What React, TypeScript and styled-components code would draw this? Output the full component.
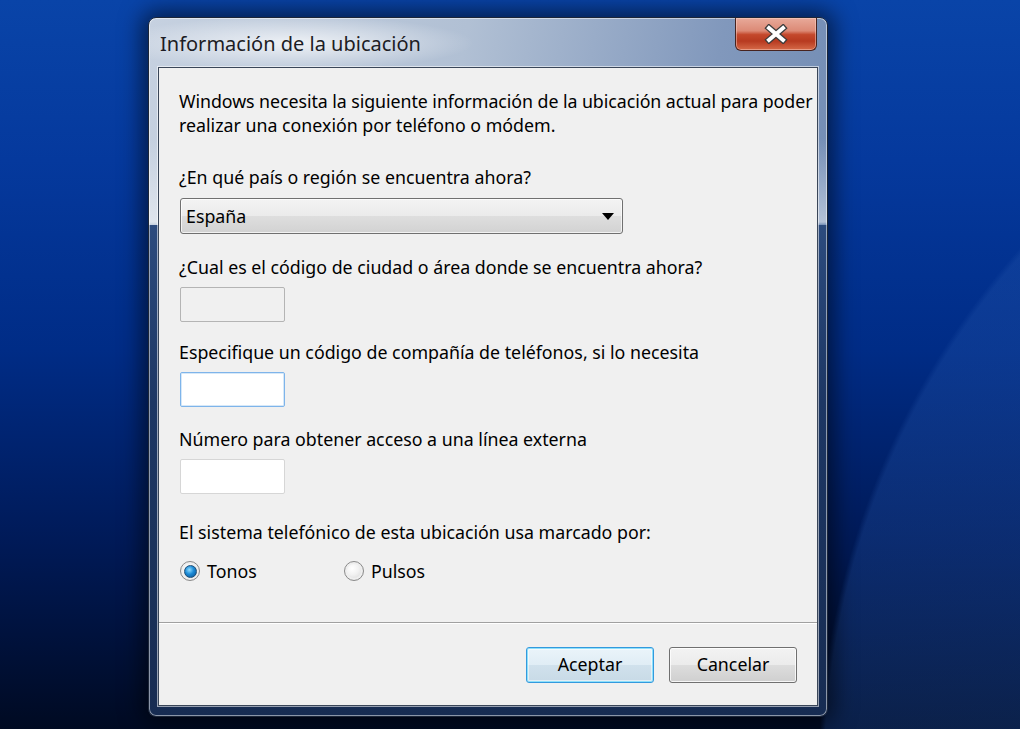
import React from 'react';
import styled, { createGlobalStyle } from 'styled-components';

const GlobalStyle = createGlobalStyle`
  html, body {
    margin: 0;
    padding: 0;
    width: 1020px;
    height: 729px;
    overflow: hidden;
  }
  * {
    box-sizing: border-box;
  }
`;

const uiFont = `"Noto Sans", "Open Sans", "DejaVu Sans", sans-serif`;

const Desktop = styled.div`
  width: 1020px;
  height: 729px;
  padding: 17px 0 0 148px;
  background:
    radial-gradient(circle at 1618px 779px, rgba(40, 90, 175, 0.32) 0, rgba(40, 90, 175, 0.28) 794px, transparent 800px),
    linear-gradient(to bottom, #0944a8 0%, #05399d 22%, #002c86 48%, #001a58 74%, #000a22 100%);
  font-family: ${uiFont};
`;

const Window = styled.div`
  width: 680px;
  height: 700px;
  display: flex;
  flex-direction: column;
  border: 1px solid #1c2638;
  border-radius: 8px;
  background:
    linear-gradient(to bottom, transparent 0, rgba(255, 255, 255, 0) 120px, rgba(255, 255, 255, 0.45) 204px, transparent 207px),
    linear-gradient(to bottom, transparent 0, transparent 207px, #2c4b7e 207px, #1d3764 55%, #172c52 100%),
    linear-gradient(100deg, #c6d1e0 0%, #b1c0d4 40%, #8198bc 72%, #6a86b0 100%);
  box-shadow:
    inset 0 0 0 1px rgba(255, 255, 255, 0.5),
    0 0 22px 6px rgba(0, 0, 0, 0.55);
`;

const TitleBar = styled.div`
  height: 49px;
  display: flex;
  justify-content: space-between;
  align-items: flex-start;
  padding: 0 10px 0 11px;
  background: radial-gradient(ellipse 180px 27px at 145px 25px, rgba(255, 255, 255, 0.75), rgba(255, 255, 255, 0) 100%);
  border-top-left-radius: 7px;
`;

const Title = styled.div`
  align-self: center;
  font-size: 20px;
  color: #1c1c24;
  margin-top: 1px;
`;

const CloseButton = styled.button`
  width: 82px;
  height: 33px;
  display: flex;
  align-items: center;
  justify-content: center;
  padding: 0;
  border: 1px solid #47231f;
  border-top: none;
  border-radius: 0 0 6px 6px;
  background: linear-gradient(to bottom, #e8aa9a 0%, #dc8a76 40%, #c4482c 52%, #b73a20 72%, #d66a48 100%);
  box-shadow: inset 0 0 0 1px rgba(255, 220, 210, 0.45);
`;

const Panel = styled.div`
  flex: 1;
  margin: 0 9px 10px 9px;
  display: flex;
  flex-direction: column;
  overflow: hidden;
  background: #f0f0f0;
  border: 1px solid #3a4658;
  box-shadow: 0 0 0 1px rgba(255, 255, 255, 0.55);
  color: #000;
  font-size: 17.8px;
  line-height: 24px;
`;

const Content = styled.div`
  flex: 1;
  display: flex;
  flex-direction: column;
  padding: 21px 0 0 20px;
`;

const Text = styled.div<{ $top?: number; $tight?: boolean }>`
  margin-top: ${p => p.$top ?? 0}px;
  white-space: nowrap;
  letter-spacing: ${p => (p.$tight ? '-0.06px' : '0')};
`;

const Select = styled.div<{ $top?: number }>`
  margin: ${p => p.$top ?? 0}px 0 0 1px;
  width: 443px;
  height: 36px;
  display: flex;
  align-items: center;
  justify-content: space-between;
  padding: 0 8px 0 5px;
  border: 1px solid #707070;
  border-radius: 3px;
  background: linear-gradient(to bottom, #f3f3f3 0%, #ebebeb 50%, #dedede 51%, #d2d2d2 100%);
  box-shadow: inset 0 0 0 1px rgba(255, 255, 255, 0.7);
`;

const Arrow = styled.span`
  width: 0;
  height: 0;
  border-left: 6px solid transparent;
  border-right: 6px solid transparent;
  border-top: 7px solid #000;
`;

type InputKind = 'disabled' | 'focused' | 'normal';

const Input = styled.div<{ $top?: number; $kind: InputKind }>`
  margin: ${p => p.$top ?? 0}px 0 0 1px;
  width: 105px;
  height: 35px;
  border-radius: 2px;
  border: 1px solid
    ${p => (p.$kind === 'disabled' ? '#b4b4b4' : p.$kind === 'focused' ? '#7eb4ea' : '#d6d6d6')};
  background: ${p => (p.$kind === 'disabled' ? '#f0f0f0' : '#ffffff')};
  box-shadow: ${p => (p.$kind === 'focused' ? 'inset 0 0 0 1px #d6e8f8' : 'none')};
`;

const RadioRow = styled.div<{ $top?: number }>`
  margin: ${p => p.$top ?? 0}px 0 0 1px;
  display: grid;
  grid-template-columns: 164px auto;
`;

const RadioOption = styled.label`
  display: flex;
  align-items: center;
  gap: 7px;
`;

const RadioCircle = styled.span<{ $checked?: boolean }>`
  width: 20px;
  height: 20px;
  border-radius: 50%;
  display: flex;
  align-items: center;
  justify-content: center;
  border: 1px solid #8a8a8a;
  background: radial-gradient(circle at 40% 35%, #ffffff 0%, #f2f2f2 40%, #cfcfcf 100%);
  box-shadow: inset 0 0 0 2px #eeeeee;

  &::after {
    content: '';
    display: ${p => (p.$checked ? 'block' : 'none')};
    width: 11px;
    height: 11px;
    border-radius: 50%;
    background: radial-gradient(circle at 40% 35%, #8fdcff 0%, #1b8ad6 45%, #0b4f8c 100%);
    border: 1px solid #1c4f78;
  }
`;

const Footer = styled.div`
  height: 83px;
  display: flex;
  justify-content: flex-end;
  align-items: flex-start;
  gap: 15px;
  padding: 24px 20px 0 0;
  border-top: 1px solid #a0a0a0;
  box-shadow: inset 0 1px 0 #ffffff;
`;

const Button = styled.button<{ $default?: boolean }>`
  width: 128px;
  height: 36px;
  padding: 0 0 2px;
  font-family: ${uiFont};
  font-size: 17.8px;
  color: #000;
  border-radius: 3px;
  border: 1px solid ${p => (p.$default ? '#3399dd' : '#707070')};
  background: ${p =>
    p.$default
      ? 'linear-gradient(to bottom, #eaf4fa 0%, #e0edf5 50%, #d0e1ec 51%, #c8dae6 100%)'
      : 'linear-gradient(to bottom, #f3f3f3 0%, #ebebeb 50%, #dddddd 51%, #cfcfcf 100%)'};
  box-shadow: ${p =>
    p.$default
      ? 'inset 0 0 0 1px #8ee0fb, inset 0 0 0 2px rgba(255, 255, 255, 0.5)'
      : 'inset 0 0 0 1px rgba(255, 255, 255, 0.8)'};
`;

const CloseIcon = () => (
  <svg width="24" height="20" viewBox="0 0 24 20">
    <path d="M5 4 L19 16 M19 4 L5 16" stroke="#3b3b3b" strokeWidth="6.5" strokeLinecap="square" />
    <path d="M5 4 L19 16 M19 4 L5 16" stroke="#ffffff" strokeWidth="4" strokeLinecap="square" />
  </svg>
);

export default function App() {
  return (
    <Desktop>
      <GlobalStyle />
      <Window>
        <TitleBar>
          <Title>Información de la ubicación</Title>
          <CloseButton aria-label="Cerrar">
            <CloseIcon />
          </CloseButton>
        </TitleBar>
        <Panel>
          <Content>
            <Text $tight>Windows necesita la siguiente información de la ubicación actual para poder</Text>
            <Text>realizar una conexión por teléfono o módem.</Text>
            <Text $top={28}>¿En qué país o región se encuentra ahora?</Text>
            <Select $top={9}>
              <span>España</span>
              <Arrow />
            </Select>
            <Text $top={21}>¿Cual es el código de ciudad o área donde se encuentra ahora?</Text>
            <Input $top={8} $kind="disabled" />
            <Text $top={18}>Especifique un código de compañía de teléfonos, si lo necesita</Text>
            <Input $top={8} $kind="focused" />
            <Text $top={20}>Número para obtener acceso a una línea externa</Text>
            <Input $top={8} $kind="normal" />
            <Text $top={26}>El sistema telefónico de esta ubicación usa marcado por:</Text>
            <RadioRow $top={15}>
              <RadioOption>
                <RadioCircle $checked />
                Tonos
              </RadioOption>
              <RadioOption>
                <RadioCircle />
                Pulsos
              </RadioOption>
            </RadioRow>
          </Content>
          <Footer>
            <Button $default>Aceptar</Button>
            <Button>Cancelar</Button>
          </Footer>
        </Panel>
      </Window>
    </Desktop>
  );
}
